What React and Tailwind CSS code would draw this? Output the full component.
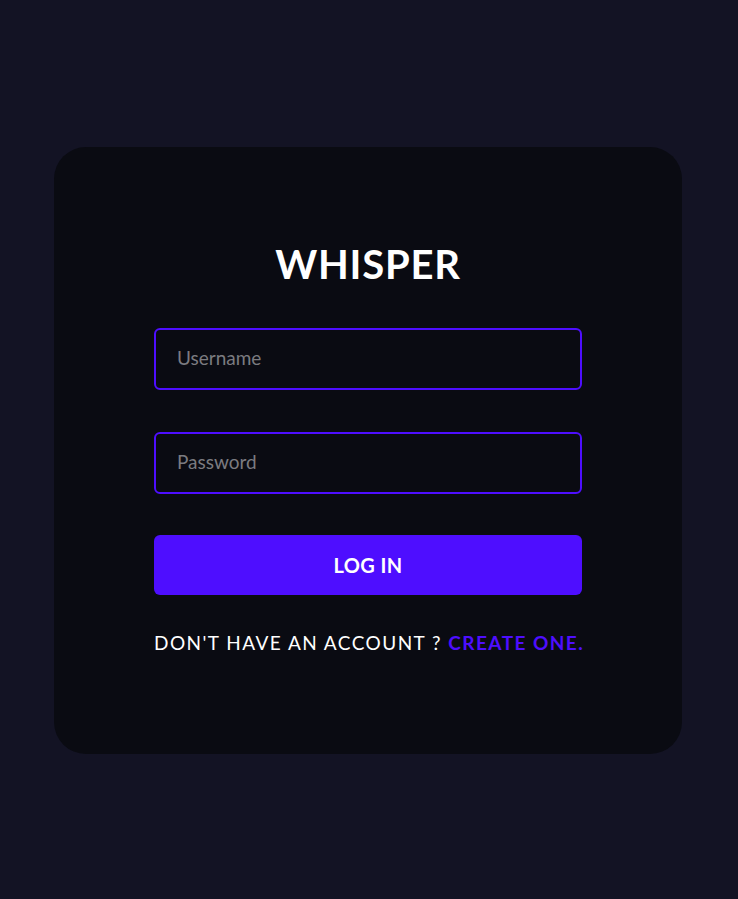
import React from "react";

export default function App() {
  return (
    <div className="min-h-screen w-full bg-[#131324] pt-[147px] pl-[54px] font-['Lato',sans-serif]">
      <form className="w-[628px] h-[607px] bg-[#0a0b12] rounded-[32px] px-[100px] pt-[99px] flex flex-col">
        <h1 className="text-white text-center font-bold text-[40px] leading-[36px] tracking-[0.02em] h-[36px] mb-[46px]">
          WHISPER
        </h1>
        <input
          type="text"
          placeholder="Username"
          className="h-[62px] w-full bg-transparent border-2 border-[#4e0eff] rounded-[6px] px-[21px] pb-[3px] text-[19px] text-white placeholder:text-[#7b7b80] outline-none"
        />
        <input
          type="password"
          placeholder="Password"
          className="mt-[42px] h-[62px] w-full bg-transparent border-2 border-[#4e0eff] rounded-[6px] px-[21px] pb-[3px] text-[19px] text-white placeholder:text-[#7b7b80] outline-none"
        />
        <button
          type="button"
          className="mt-[41px] h-[60px] w-full bg-[#4e0eff] rounded-[6px] text-white font-bold text-[20px] tracking-[0.02em] uppercase"
        >
          Log in
        </button>
        <p className="mt-[34px] text-center text-white text-[19px] tracking-[1.45px] uppercase whitespace-nowrap">
          Don't have an account ?{" "}
          <span className="text-[#4e0eff] font-bold">Create one.</span>
        </p>
      </form>
    </div>
  );
}
